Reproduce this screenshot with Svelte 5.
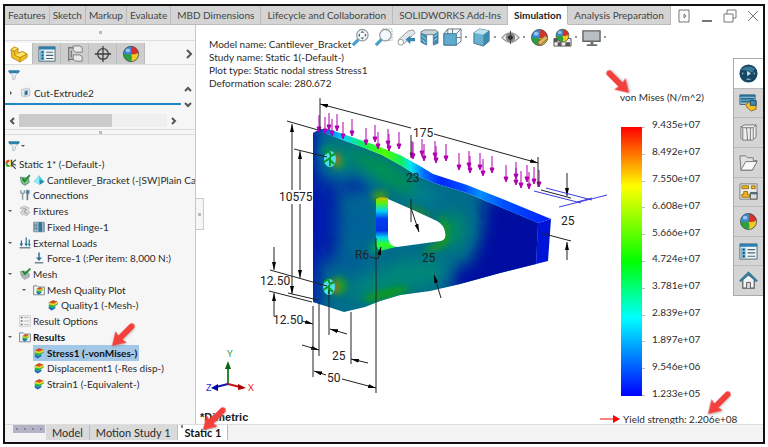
<script lang="ts">
  const ribbonTabs = [
    'Features',
    'Sketch',
    'Markup',
    'Evaluate',
    'MBD Dimensions',
    'Lifecycle and Collaboration',
    'SOLIDWORKS Add-Ins',
    'Simulation',
    'Analysis Preparation',
  ];
  let activeRibbon = $state('Simulation');

  const managerTabs = ['part', 'properties', 'config', 'target', 'appearance'];
  let activeManager = $state('part');

  type Row = { label: string; icons: string[]; level: number; open?: boolean; bold?: boolean };

  const rows: Row[] = [
    { label: 'Static 1* (-Default-)', icons: ['study'], level: 0 },
    { label: 'Cantilever_Bracket (-[SW]Plain Carl', icons: ['solid', 'body'], level: 1 },
    { label: 'Connections', icons: ['connections'], level: 1 },
    { label: 'Fixtures', icons: ['fixtures'], level: 1, open: true },
    { label: 'Fixed Hinge-1', icons: ['hinge'], level: 2 },
    { label: 'External Loads', icons: ['loads'], level: 1, open: true },
    { label: 'Force-1 (:Per item: 8,000 N:)', icons: ['force'], level: 2 },
    { label: 'Mesh', icons: ['mesh'], level: 1, open: true },
    { label: 'Mesh Quality Plot', icons: ['plotfolder'], level: 2, open: true },
    { label: 'Quality1 (-Mesh-)', icons: ['plot'], level: 3 },
    { label: 'Result Options', icons: ['options'], level: 1 },
    { label: 'Results', icons: ['plotfolder'], level: 1, open: true, bold: true },
    { label: 'Stress1 (-vonMises-)', icons: ['plot'], level: 2, bold: true },
    { label: 'Displacement1 (-Res disp-)', icons: ['plot'], level: 2 },
    { label: 'Strain1 (-Equivalent-)', icons: ['plot'], level: 2 },
  ];
  let selected = $state('Stress1 (-vonMises-)');

  const hudTools = [
    { name: 'zoomfit', menu: false },
    { name: 'zoomarea', menu: false },
    { name: 'previous', menu: false },
    { name: 'section', menu: false },
    { name: 'orientation', menu: true },
    { name: 'display', menu: true },
    { name: 'eye', menu: true },
    { name: 'editappearance', menu: false },
    { name: 'scene', menu: true },
    { name: 'monitor', menu: true },
  ];

  const taskTabs = ['compass', 'resources', 'library', 'folder', 'palette', 'appearance', 'properties', 'home'];

  const legend = [
    '9.435e+07', '8.492e+07', '7.550e+07', '6.608e+07', '5.666e+07', '4.724e+07',
    '3.781e+07', '2.839e+07', '1.897e+07', '9.546e+06', '1.233e+05',
  ];

  // tip of every force arrow along the top face
  const forces = [
    [319, 132], [325, 134], [329, 130], [332, 136], [337, 131], [343, 139], [352, 136],
    [366, 145], [375, 142], [378, 149], [388, 146], [389, 151], [399, 149], [412, 158],
    [413, 159], [422, 156], [424, 161], [435, 158], [436, 163], [446, 161], [459, 170],
    [469, 168], [470, 173], [480, 170], [483, 176], [492, 173], [506, 182], [516, 179],
    [516, 185], [521, 188], [527, 182], [529, 189], [534, 184], [539, 187],
  ];

  // dimension leaders: x1, y1, x2, y2, arrowhead at the second point
  const leaders = [
    [411, 128, 320, 104], [434, 134, 538, 163],
    [292, 190, 292, 124], [292, 204, 292, 294],
    [300, 190, 300, 151], [300, 204, 300, 278],
    [274, 247, 274, 270], [274, 316, 274, 293],
    [302, 321, 313, 324], [347, 334, 330, 329],
    [302, 345, 319, 350], [368, 363, 351, 359],
    [326, 375, 314, 371], [342, 379, 376, 388],
    [411, 208, 419, 232], [378, 259, 381, 247],
    [441, 298, 434, 275], [567, 173, 567, 196], [567, 260, 567, 242],
  ];

  const extensions = [
    [320, 98, 320, 131], [538, 157, 538, 187], [411, 135, 411, 158], [411, 199, 411, 222],
    [287, 121, 318, 130], [294, 149, 327, 157], [270, 270, 327, 286], [288, 293, 318, 300],
    [269, 291, 312, 302], [313, 306, 313, 377], [319, 303, 319, 356], [329, 290, 329, 335],
    [351, 312, 351, 364], [376, 238, 376, 393], [370, 257, 378, 259],
    [541, 190, 571, 198], [541, 233, 571, 241],
  ];

  const dims: [string, number, number][] = [
    ['175', 413, 137], ['105', 279, 201], ['75', 299, 201], ['23', 406, 182],
    ['25', 422, 262], ['R6', 355, 259], ['12.50', 260, 285], ['12.50', 273, 324],
    ['25', 332, 360], ['50', 327, 382], ['25', 561, 225],
  ];

  const callouts = [
    [112, 346, 45], [203, 430, 45], [708, 414, 45], [629, 93, -45],
  ];
</script>

{#snippet ball()}
  <circle cx="10" cy="10" r="8.5" fill="#2d9f3c" />
  <path d="M10 1.5A8.5 8.5 0 0 0 1.6 9.5Q6 11 9.500 10.500Q11 6 10 1.500Z" fill="#3b86dc" />
  <path d="M10 1.500Q12 5 10 10.500Q15 11 18.400 9A8.500 8.500 0 0 0 10 1.500Z" fill="#dc2f2b" />
  <path d="M10 10.500Q15 11 18.400 9A8.500 8.500 0 0 1 10 18.500Q12 14 10 10.500Z" fill="#f3c926" />
  <circle cx="10" cy="10" r="8.500" fill="none" stroke="#4a4a50" stroke-width=".8" />
  <ellipse cx="6.500" cy="6" rx="2.500" ry="2" fill="#fff" opacity=".5" />
{/snippet}

{#snippet heatcube()}
  <path d="M3 6L10 2L17 4L18 9L13 12L14 15L8 19L3 16Z" fill="#28b64a" />
  <path d="M3 6L10 2L17 4L11 8Z" fill="#e5432e" />
  <path d="M3 6L11 8L17 4L18 8L11 11L3 9Z" fill="#f2cf2b" />
  <path d="M3 13L9 15L14 13L14 15L8 19L3 16Z" fill="#2368d8" />
{/snippet}

{#snippet icon(name: string)}
  <svg viewBox="0 0 20 20" aria-hidden="true">
    {#if name === 'part'}
      <path d="M1 5L5 2L9 4L9 9L14 7L19 10L19 14L11 19L2 14Z" fill="#f2c022" stroke="#a87a10" stroke-width=".8" />
      <path d="M1 5L5 7L5 11L11 14L11 19M5 7L9 4M11 14L19 10" fill="none" stroke="#a87a10" stroke-width=".8" />
      <path d="M2 5L5 3L8 4L5 6ZM6 11L14 8L17 10L11 13Z" fill="#ffe56c" />
    {:else if name === 'properties'}
      <path d="M1 2H19V18H1Z" fill="#eef4f8" stroke="#4e6673" />
      <path d="M1 2H19V5H1Z" fill="#2c80b0" />
      <path d="M2 6H7V17H2Z" fill="#7db9d8" />
      <path d="M4 8h2M4 11.500h2M4 15h2" stroke="#17506f" stroke-width="2" />
      <path d="M9 8h8M9 11.500h8M9 15h8" stroke="#4e6673" stroke-width="1.200" />
    {:else if name === 'config'}
      <path d="M3 2V18M3 3H10M3 16H10M6 6V14" fill="none" stroke="#777" stroke-width="1.500" />
      <path d="M8 1H15L18 3V8H11L8 6ZM8 11H15L18 13V18H11L8 16Z" fill="#e9e9e9" stroke="#777" />
    {:else if name === 'target'}
      <circle cx="10" cy="10" r="6" fill="none" stroke="#3d3d3d" stroke-width="1.400" />
      <path d="M10 1V19M1 10H19" stroke="#3d3d3d" stroke-width="1.400" />
    {:else if name === 'appearance'}
      {@render ball()}
    {:else if name === 'filter'}
      <path d="M1 4L8 11V18L12 16V11L19 4Z" fill="#f4f4f4" stroke="#8b979e" />
      <path d="M1 2H19V5L17 7H3L1 5Z" fill="#2c81ad" />
    {:else if name === 'feature'}
      <path d="M3 5L12 2L18 4V15L9 18L3 16Z" fill="#e6eaec" stroke="#98a1a6" />
      <path d="M8 7L14 5V14L8 16Z" fill="#5c9dbd" />
      <path d="M10 9L13 8V13H10Z" fill="#174f72" />
    {:else if name === 'study'}
      <circle cx="7" cy="9" r="6" fill="#f2cc22" />
      <path d="M1 9A6 6 0 0 1 7 3V9Z" fill="#e04a35" />
      <path d="M1 9A6 6 0 0 0 7 15V9Z" fill="#39aa45" />
      <circle cx="7" cy="9" r="2.500" fill="#dff3ff" />
      <path d="M10 10L18 18M11 3V14M11 9L18 3M12 9L18 12" stroke="#3c4d55" stroke-width="2" />
    {:else if name === 'solid'}
      <path d="M2 5L16 7L17 14L10 19L4 15Z" fill="#7bbd8f" stroke="#45775a" />
      <path d="M6 7L9 12L18 2" fill="none" stroke="#168a25" stroke-width="3" />
    {:else if name === 'body'}
      <path d="M10 2L19 13L11 18L1 13Z" fill="#49c9df" />
      <path d="M10 2L11 18L1 13Z" fill="#91e9f4" />
      <path d="M11 9L19 13L11 18Z" fill="#238fae" />
    {:else if name === 'connections'}
      <path d="M3 2V6L6 8L9 6V2M6 8V18" fill="none" stroke="#909ba0" stroke-width="2.500" />
      <path d="M12 2H17V8H15V18H13V8H12Z" fill="#337eac" stroke="#7c8b92" />
    {:else if name === 'fixtures'}
      <path d="M2 5L9 2L17 5L14 8L18 12L13 18L8 15L6 17L2 12L7 10Z" fill="#ddd" stroke="#999" />
      <path d="M7 6L12 7L9 12L14 14" fill="none" stroke="#8b8b8b" stroke-width="1.500" />
    {:else if name === 'hinge'}
      <path d="M1 2H19V18H1Z" fill="#b5c4cd" stroke="#536f80" />
      <path d="M9 2H15V18H9Z" fill="#267aa7" />
      <path d="M3 4V16M6 4V16M17 4V16M2 7H8M2 12H8M10 7H14M10 12H14" stroke="#4e6878" />
    {:else if name === 'loads'}
      <path d="M4 6V14M12 1V13M17 4V14" stroke="#286f99" stroke-width="2" />
      <path d="M1 11H7L4 16ZM9 11H15L12 16ZM15 12H20L17 16Z" fill="#286f99" />
      <path d="M1 18H19" stroke="#536a77" stroke-width="2" />
    {:else if name === 'force'}
      <path d="M10 1V12" stroke="#286f99" stroke-width="2.500" />
      <path d="M5 9H15L10 15Z" fill="#286f99" />
      <path d="M3 18H17" stroke="#536a77" stroke-width="2" />
    {:else if name === 'mesh'}
      <path d="M2 6L12 5L17 9V15L9 19L4 14Z" fill="#b5bfc0" stroke="#7e8a8c" />
      <path d="M4 8L13 17M7 6L16 13M5 13L14 7" stroke="#7e8a8c" />
      <path d="M6 5L10 10L19 1" fill="none" stroke="#168a25" stroke-width="3" />
    {:else if name === 'plotfolder'}
      <path d="M1 3H7L9 5H19V18H1Z" fill="#f4f4f4" stroke="#737f86" stroke-width="1.500" />
      <g transform="translate(4 4) scale(.7)">{@render heatcube()}</g>
    {:else if name === 'plot'}
      {@render heatcube()}
    {:else if name === 'options'}
      <path d="M1 1H19V19H1Z" fill="#f3f3f3" stroke="#bbb" />
      <path d="M3 4h3M3 10h3M3 16h3" stroke="#60737e" stroke-width="2.500" />
      <path d="M8 4h9M8 10h9M8 16h9" stroke="#999" />
    {:else if name === 'zoomfit' || name === 'zoomarea'}
      <path d="M2 18L8 12" stroke="#4b9fc8" stroke-width="3.500" />
      <circle cx="12" cy="7.500" r="6" fill="#f4f9fb" stroke="#8d999f" stroke-width="1.200" />
      {#if name === 'zoomfit'}
        <path d="M12 3L14 5H10ZM12 12L14 10H10ZM7.500 7.500L9.500 5.500V9.500ZM16.500 7.500L14.500 5.500V9.500Z" fill="#586168" />
      {:else}
        <path d="M9 1H19V13H15" fill="none" stroke="#8d999f" stroke-dasharray="1.500 1.500" />
      {/if}
    {:else if name === 'previous'}
      <path d="M2 12L12 3L17 2L19 5L8 16L3 17Z" fill="#e3e6e7" stroke="#8d999f" />
      <circle cx="4" cy="15" r="3" fill="#fff" stroke="#8d999f" />
      <path d="M9 12L14 8V10.500H19V14H14V17Z" fill="#3485b1" />
    {:else if name === 'section'}
      <path d="M1 4L5 2H16L19 4V16L14 18V7H7V18L1 15Z" fill="#c9d2d6" stroke="#738189" />
      <path d="M1 5L7 7V18L1 15ZM14 7L19 4V16L14 18Z" fill="#3f8db5" />
      <path d="M2 8L6 12M2 12L6 16M15 9L18 7M15 13L18 11" stroke="#b7dceb" />
    {:else if name === 'orientation'}
      <path d="M5 1H19V14L14 18H1V6Z" fill="#f4f7f9" stroke="#69757b" />
      <path d="M1 6H14V18H1Z" fill="#60acd0" stroke="#3a7899" />
      <path d="M14 6L19 1M10 1V6M5 1V6M14 10H19" stroke="#69757b" />
    {:else if name === 'display'}
      <path d="M2 5L8 1L18 3V14L12 19L2 16Z" fill="#6ab0cf" stroke="#387590" />
      <path d="M2 5L8 1L18 3L12 7Z" fill="#bfe2ef" />
      <path d="M12 7L18 3V14L12 19Z" fill="#3e89ad" />
    {:else if name === 'eye'}
      <path d="M1 10Q10 0 19 10Q10 20 1 10Z" fill="#eee" stroke="#999" stroke-width="1.300" />
      <circle cx="10" cy="10" r="5" fill="#888" />
      <circle cx="10" cy="10" r="2.500" fill="#222" />
      <path d="M10 3V17" stroke="#444" />
    {:else if name === 'editappearance'}
      {@render ball()}
      <path d="M8 18L9 14L16 8L19 11L12 17Z" fill="#e5b35c" stroke="#785f3b" />
    {:else if name === 'scene'}
      <path d="M1 11H19V19H1Z" fill="#eee" stroke="#555" />
      <path d="M1 11h4v4H1zM9 11h4v4H9zM5 15h4v4H5zM13 15h5v4h-5z" fill="#555" />
      <g transform="translate(2 0) scale(.8)">{@render ball()}</g>
    {:else if name === 'monitor'}
      <path d="M1 3H19V14H1Z" fill="#b9bec0" stroke="#606668" stroke-width="1.500" />
      <path d="M9 14H12V17H16V19H5V17H9Z" fill="#696f72" />
    {:else if name === 'compass'}
      <circle cx="10" cy="10" r="9.500" fill="#164863" />
      <path d="M2 6Q9 0 17 5L14 9L9 7Z" fill="#3a789a" />
      <path d="M9 8L12 10L9 12ZM4 9V11M16 9V11M8 16H12" fill="#d8edf6" stroke="#bcd9e6" />
    {:else if name === 'resources'}
      <path d="M1 2H17V12H1Z" fill="#a6cadb" stroke="#385e72" />
      <path d="M1 3H17M2 6H16M2 9H16" stroke="#236f98" stroke-width="2" />
      <path d="M7 12L12 9H18V17L13 19L9 16Z" fill="#f1bd28" stroke="#987012" />
      <path d="M12 8H18V13H12Z" fill="#3d8cb4" stroke="#1c526e" />
    {:else if name === 'library'}
      <path d="M2 4L6 2L18 2V15L14 18H4L2 16Z" fill="#eee" stroke="#777" />
      <path d="M4 5V18M2 4L5 5H15L18 2M8 5L9 18M12 5V18M15 5V17" fill="none" stroke="#777" />
    {:else if name === 'folder'}
      <path d="M1 3H7L9 5H15V8H19L14 18H2Z" fill="#e2e2e2" stroke="#777" />
      <path d="M2 18L7 9H19L14 18Z" fill="#f8f8f8" stroke="#777" />
    {:else if name === 'palette'}
      <path d="M1 2H19V18H1Z" fill="#eee" stroke="#777" />
      <path d="M3 4H10V7H3ZM13 4H17V7H13ZM5 10H9V13H11V16H3V13H5Z" fill="#edb81f" stroke="#977318" />
      <path d="M12 11H19V18H12Z" fill="#ddd" stroke="#555" />
      <path d="M12 11H19V13H12Z" fill="#566e7c" />
    {:else if name === 'home'}
      <path d="M4 9V18H16V9L10 4Z" fill="#f4f4f4" stroke="#555" stroke-width="1.200" />
      <path d="M1 11L10 2L19 11" fill="none" stroke="#34809f" stroke-width="2.500" />
      <path d="M8 18V12H12V18" fill="#ddd" stroke="#555" />
    {/if}
  </svg>
{/snippet}

<div class="window">
  <header class="ribbon">
    <nav class="ribbon-tabs">
      {#each ribbonTabs as tab}
        <button class:active={tab === activeRibbon} onclick={() => (activeRibbon = tab)}>{tab}</button>
      {/each}
    </nav>
    <div class="window-buttons">
      <button aria-label="Expand pane">
        <svg viewBox="0 0 14 14"><path d="M2 1H12V13H2ZM7 5L9 7L7 9Z" /></svg>
      </button>
      <button aria-label="Minimize">
        <svg viewBox="0 0 14 14"><path d="M2 12H12" stroke-width="2" /></svg>
      </button>
      <button aria-label="Restore">
        <svg viewBox="0 0 14 14"><path d="M4 5V1H13V9H10M1 5H10V13H1Z" /></svg>
      </button>
      <button aria-label="Close">
        <svg viewBox="0 0 14 14"><path d="M2 2L12 12M12 2L2 12" /></svg>
      </button>
    </div>
  </header>

  <main class="workspace">
    <aside class="manager">
      <div class="grip"><i></i></div>
      <div class="manager-tabs">
        {#each managerTabs as tab}
          <button class:active={tab === activeManager} aria-label={tab} onclick={() => (activeManager = tab)}>
            {@render icon(tab)}
          </button>
        {/each}
        <button class="more" aria-label="More tabs">
          <svg viewBox="0 0 10 10"><path d="M3 1L7 5L3 9" /></svg>
        </button>
      </div>
      <div class="features">
        <button class="filter" aria-label="Filter features">{@render icon('filter')}</button>
        <div class="feature-body">
          <button class="feature"><b></b>{@render icon('feature')}<span>Cut-Extrude2</span></button>
          <div class="v-scroll">
            <button aria-label="Scroll up"><svg viewBox="0 0 10 10"><path d="M2 7L5 4L8 7" /></svg></button>
            <button aria-label="Scroll down"><svg viewBox="0 0 10 10"><path d="M2 4L5 7L8 4" /></svg></button>
          </div>
        </div>
        <div class="h-scroll">
          <button aria-label="Scroll left"><svg viewBox="0 0 10 10"><path d="M7 2L4 5L7 8" /></svg></button>
          <div class="track"><div class="thumb"></div></div>
          <button aria-label="Scroll right"><svg viewBox="0 0 10 10"><path d="M3 2L6 5L3 8" /></svg></button>
        </div>
      </div>
      <div class="grip small"><i></i></div>
      <div class="tree-filter">
        <button class="filter" aria-label="Filter tree">{@render icon('filter')}</button>
        <b></b>
      </div>
      <ul class="tree">
        {#each rows as row}
          <li class="level-{row.level}">
            {#if row.level > 0}
              <span class="expander">
                {#if row.open}<b></b>{/if}
              </span>
            {/if}
            <button
              class:bold={row.bold}
              class:selected={row.label === selected}
              onclick={() => (selected = row.label)}
            >
              {#each row.icons as name}{@render icon(name)}{/each}
              <span>{row.label}</span>
            </button>
          </li>
        {/each}
      </ul>
    </aside>

    <section class="viewport">
      <svg class="model" viewBox="196 25 567 399" role="img" aria-label="von Mises stress plot of the bracket">
        <defs>
          <clipPath id="front">
            <path d="M313 133L320 131L340 139L362 147L382 155L400 165L418 176L434 183L467 193L500 207L538 223L536 264L500 273L460 284L430 291L400 295L380 301L365 307L344 312L313 302Z" />
          </clipPath>
          <linearGradient id="top" gradientUnits="userSpaceOnUse" x1="313" y1="0" x2="551" y2="0">
            <stop offset="0" stop-color="#0010c0" />
            <stop offset=".05" stop-color="#0060f0" />
            <stop offset=".13" stop-color="#00d8f8" />
            <stop offset=".21" stop-color="#10f060" />
            <stop offset=".3" stop-color="#50ff00" />
            <stop offset=".37" stop-color="#10f060" />
            <stop offset=".41" stop-color="#00e8f0" />
            <stop offset=".47" stop-color="#0068ff" />
            <stop offset=".54" stop-color="#0028ff" />
            <stop offset=".64" stop-color="#0050ff" />
            <stop offset=".7" stop-color="#0090ff" />
            <stop offset=".8" stop-color="#0050ff" />
            <stop offset="1" stop-color="#0020ff" />
          </linearGradient>
          <linearGradient id="slot" x1="0" y1="0" x2="0" y2="1">
            <stop offset="0" stop-color="#e0b000" />
            <stop offset=".1" stop-color="#60f000" />
            <stop offset=".25" stop-color="#00d8f0" />
            <stop offset=".4" stop-color="#0040f0" />
            <stop offset=".62" stop-color="#0030e8" />
            <stop offset=".75" stop-color="#00d8f0" />
            <stop offset=".88" stop-color="#30ff20" />
            <stop offset="1" stop-color="#20e060" />
          </linearGradient>
          <filter id="soft" x="-50%" y="-50%" width="200%" height="200%"><feGaussianBlur stdDeviation="8" /></filter>
          <filter id="softer" x="-50%" y="-50%" width="200%" height="200%"><feGaussianBlur stdDeviation="3" /></filter>
          <marker id="head" viewBox="0 0 8 4" refX="8" refY="2" markerWidth="8" markerHeight="4" orient="auto" markerUnits="userSpaceOnUse">
            <path d="M0 0L8 2L0 4Z" />
          </marker>
        </defs>

        <g clip-path="url(#front)">
          <path d="M310 125H560V320H310Z" fill="#006c8c" />
          <g filter="url(#soft)">
            <path d="M300 120H318V310H300Z" fill="#0008b4" />
            <ellipse cx="329" cy="220" rx="12" ry="48" fill="#0020a8" />
            <ellipse cx="356" cy="185" rx="14" ry="9" fill="#0020a8" />
            <path d="M485 192L560 215V280L460 300L470 265L482 232Z" fill="#0008a0" />
            <path d="M456 268L500 250V290H440Z" fill="#0010a0" />
            <path d="M345 146L385 158L420 186L435 208L400 192L362 172Z" fill="#009450" />
            <path d="M330 140L348 148L350 170L330 170Z" fill="#008870" />
            <ellipse cx="425" cy="196" rx="14" ry="9" fill="#008090" />
            <ellipse cx="452" cy="230" rx="12" ry="18" fill="#009060" />
            <ellipse cx="360" cy="222" rx="12" ry="24" fill="#00609a" />
            <path d="M400 262L440 258L446 280L385 296L350 300L352 284Z" fill="#008878" />
            <ellipse cx="353" cy="262" rx="14" ry="10" fill="#005c98" />
          </g>
          <g filter="url(#softer)">
            <path d="M438 212L448 224L449 242L438 250L420 252L442 240L443 228Z" fill="#1c9c18" />
            <ellipse cx="419" cy="211" rx="14" ry="2" fill="#309010" transform="rotate(24 419 211)" />
            <ellipse cx="386" cy="294" rx="24" ry="5" fill="#109820" transform="rotate(-14 386 294)" />
            <ellipse cx="339" cy="286" rx="8" ry="9" fill="#209a28" />
            <ellipse cx="338" cy="162" rx="6" ry="7" fill="#289838" />
            <ellipse cx="380" cy="196" rx="8" ry="5" fill="#409818" />
            <ellipse cx="375" cy="248" rx="5" ry="6" fill="#009860" />
            <ellipse cx="327" cy="150" rx="7" ry="3" fill="#009850" />
          </g>
        </g>
        <path d="M313 133L320 129L328 129L340 133L375 145L400 155L420 166L433 174L467 185L500 198L551 219L538 223L500 207L467 193L434 183L418 176L400 165L382 155L362 147L340 139L322 132Z" fill="url(#top)" />
        <path d="M538 223L551 219L548 261L536 264Z" fill="#0014d8" />
        <path d="M376 199Q379 196 388 198V238L396 247L380 251Q376 248 376 242Z" fill="url(#slot)" />
        <path d="M388 199L411 209L437 221Q444 225 445 232Q447 239 441 241L397 247Q388 246 388 236Z" fill="#fff" />

        {#each [[330, 159], [329, 287]] as [x, y]}
          <ellipse cx={x + 5} cy={y} rx="4" ry="6" fill="#d06020" opacity=".8" filter="url(#softer)" />
          <ellipse cx={x} cy={y} rx="6" ry="8" fill="#4ce0e8" />
          <path d="M{x - 5} {y - 5}l4 -3 2 5 4 -2M{x - 6} {y + 3}l5 -3 5 5M{x} {y - 2}v9" fill="none" stroke="#089828" stroke-width="2" />
        {/each}

        <g class="forces">
          {#each forces as [x, y]}
            <path d="M{x} {y - 17}V{y - 4}" />
            <path d="M{x - 2} {y - 5}h4l-2 5z" />
          {/each}
        </g>

        <g class="dims">
          {#each leaders as [x1, y1, x2, y2]}
            <line {x1} {y1} {x2} {y2} marker-end="url(#head)" />
          {/each}
          {#each extensions as [x1, y1, x2, y2]}
            <line {x1} {y1} {x2} {y2} />
          {/each}
          {#each dims as [label, x, y]}
            <text {x} {y}>{label}</text>
          {/each}
        </g>
        <path d="M546 188L592 200M534 191L581 203M559 207L607 195M577 202L592 198" fill="none" stroke="#3a3ae0" />

        <path d="M228 384V368" stroke="#2a8a2a" stroke-width="2" />
        <path d="M225 369L228 361L231 369Z" fill="#0b640b" />
        <path d="M228 384L240 387" stroke="#c01818" stroke-width="2" />
        <path d="M238 384L246 388L238 390Z" fill="#b00000" />
        <path d="M228 384L216 387" stroke="#1515b0" stroke-width="2" />
        <path d="M218 384L211 388L218 391Z" fill="#0000a8" />
        <text class="axis y" x="227" y="357">Y</text>
        <text class="axis x" x="248" y="391">X</text>
        <text class="axis z" x="206" y="391">Z</text>
        <text class="view-name" x="200" y="421">*Dimetric</text>
      </svg>

      <div class="study-info">
        <p>Model name: Cantilever_Bracket</p>
        <p>Study name: Static 1(-Default-)</p>
        <p>Plot type: Static nodal stress Stress1</p>
        <p>Deformation scale: 280.672</p>
      </div>

      <div class="hud">
        {#each hudTools as tool}
          <button class:menu={tool.menu} aria-label={tool.name}>{@render icon(tool.name)}</button>
        {/each}
      </div>

      <button class="splitter" aria-label="Collapse panel"><i></i></button>

      <div class="legend">
        <h2>von Mises (N/m^2)</h2>
        <div class="scale">
          <div class="bar"></div>
          <div class="ticks">
            {#each legend as value}<i></i>{/each}
          </div>
          <ol>
            {#each legend as value}<li>{value}</li>{/each}
          </ol>
        </div>
        <p class="yield">
          <svg viewBox="0 0 20 8"><path d="M0 4H14" stroke="#f00" /><path d="M13 0L20 4L13 8Z" fill="#f00" /></svg>
          Yield strength: 2.206e+08
        </p>
      </div>

      <div class="task-pane">
        {#each taskTabs as tab, i}
          <button class:active={i === 0} aria-label={tab}>{@render icon(tab)}</button>
        {/each}
      </div>
    </section>
  </main>

  <footer class="study-tabs">
    <div class="tab-nav"><i></i><i></i><i></i><i></i></div>
    <button>Model</button>
    <button>Motion Study 1</button>
    <button class="active">Static 1</button>
  </footer>

  <svg class="callouts" viewBox="5 6 758 436" aria-hidden="true">
    {#each callouts as [x, y, angle]}
      <path d="M0 0L-8 -13L-3 -12L-3 -29Q0 -33 3 -29L3 -12L8 -13Z" transform="translate({x} {y}) rotate({angle})" />
    {/each}
  </svg>
</div>

<style>
  :global(body) {
    background: #fff;
    font-family: Lato, 'Open Sans', sans-serif;
    font-size: 10px;
    color: #2b2b2b;
  }

  button {
    display: flex;
    align-items: center;
    justify-content: center;
    padding: 0;
    border: 0;
    background: none;
    color: inherit;
    font: inherit;
    white-space: nowrap;
  }

  svg {
    display: block;
    flex: none;
  }

  p,
  h2,
  ul,
  ol {
    margin: 0;
    padding: 0;
    list-style: none;
    font-size: 10px;
    font-weight: 400;
  }

  .window {
    position: relative;
    display: flex;
    flex-direction: column;
    box-sizing: border-box;
    min-height: calc(100vh - 7px);
    margin: 4px 3px 3px;
    border: 2px solid #111;
    background: #f5f5f5;
  }

  .ribbon {
    display: flex;
    justify-content: space-between;
    height: 19px;
    background: #fff;
  }

  .ribbon-tabs {
    display: flex;
    background: #d4d4d4;
  }

  .ribbon-tabs button {
    padding: 0 3px;
    border-right: 1px solid #bbb;
    border-bottom: 1px solid #bbb;
    color: #444;
  }

  .ribbon-tabs button:nth-child(n + 5) {
    padding: 0 6px;
  }

  .ribbon-tabs button.active {
    border-bottom-color: #fff;
    background: #fff;
    color: #222;
    font-weight: 700;
  }

  .window-buttons {
    display: flex;
    align-items: center;
    gap: 9px;
    padding-right: 3px;
  }

  .window-buttons svg {
    width: 14px;
    height: 14px;
    fill: none;
    stroke: #777;
  }

  .workspace {
    display: flex;
    flex: 1;
  }

  .manager {
    display: flex;
    flex-direction: column;
    flex: none;
    width: 190px;
    overflow: hidden;
    border-right: 1px solid #c8c8c8;
    background: #f6f6f6;
  }

  .grip {
    display: flex;
    align-items: center;
    justify-content: center;
    height: 15px;
    border-bottom: 1px solid #ddd;
  }

  .grip.small {
    height: 4px;
    border-top: 1px solid #ddd;
  }

  .grip i,
  .splitter i {
    width: 3px;
    height: 3px;
    background: #bbb;
  }

  .manager-tabs {
    display: flex;
    height: 24px;
    padding-top: 2px;
    box-sizing: border-box;
    border-bottom: 1px solid #ddd;
  }

  .manager-tabs button {
    width: 28px;
    box-sizing: border-box;
    border-right: 1px solid #bbb;
    background: #cdcdcd;
  }

  .manager-tabs button.active {
    background: #fff;
  }

  .manager-tabs svg {
    width: 18px;
    height: 18px;
  }

  .manager-tabs .more {
    width: 12px;
    margin-left: auto;
    border: 0;
    background: none;
  }

  .manager-tabs .more svg,
  .v-scroll svg,
  .h-scroll svg {
    width: 10px;
    height: 10px;
    fill: none;
    stroke: #555;
    stroke-width: 2;
  }

  .filter {
    width: 12px;
    height: 12px;
  }

  .filter svg {
    width: 12px;
    height: 12px;
  }

  .features {
    padding-top: 4px;
  }

  .features .filter {
    margin-left: 3px;
  }

  .feature-body {
    display: flex;
    justify-content: space-between;
    height: 30px;
  }

  .feature {
    flex: 1;
    justify-content: flex-start;
    gap: 3px;
    height: 23px;
    margin-top: 1px;
    padding-left: 5px;
    border-bottom: 2px solid #2088c4;
  }

  .feature b {
    width: 0;
    margin-right: 3px;
    border: 2px solid transparent;
    border-left-color: #555;
  }

  .feature svg {
    width: 11px;
    height: 11px;
  }

  .v-scroll {
    display: flex;
    flex-direction: column;
    justify-content: space-around;
    width: 14px;
  }

  .v-scroll svg {
    margin: 0 auto;
  }

  .h-scroll {
    display: flex;
    height: 13px;
    margin: 3px 14px 2px 0;
  }

  .h-scroll button {
    width: 14px;
  }

  .track {
    flex: 1;
    background: #efefef;
  }

  .thumb {
    width: 63%;
    height: 100%;
    background: #cbcbcb;
  }

  .tree-filter {
    display: flex;
    align-items: center;
    gap: 1px;
    height: 21px;
    padding-left: 3px;
  }

  .tree-filter b,
  .expander b {
    width: 0;
    height: 0;
    border: 2px solid transparent;
    border-top-color: #555;
    border-bottom: 0;
  }

  .tree {
    display: grid;
    grid-auto-rows: 1fr;
    height: 236px;
  }

  .tree li {
    display: flex;
    min-height: 0;
  }

  .level-2 {
    padding-left: 14px;
  }

  .level-3 {
    padding-left: 28px;
  }

  .expander {
    display: flex;
    align-items: center;
    flex: none;
    width: 14px;
  }

  .expander b {
    margin-left: 3px;
  }

  .tree button {
    gap: 2px;
    padding-right: 2px;
  }

  .tree button.bold {
    color: #111;
    font-weight: 700;
  }

  .tree button.selected {
    background: #a3c7e6;
  }

  .tree svg {
    width: 12px;
    height: 12px;
  }

  .viewport {
    position: relative;
    display: flex;
    flex: 1;
    min-width: 0;
    background: #fff;
  }

  .model {
    position: absolute;
    inset: 0;
    width: 100%;
    height: 100%;
  }

  .forces path {
    fill: #b000b0;
    stroke: #b000b0;
    stroke-width: 1;
  }

  .dims line {
    stroke: #222;
    stroke-width: 1;
  }

  .dims text {
    fill: #222;
    font-family: Roboto, 'Liberation Sans', sans-serif;
    font-size: 12px;
  }

  .axis {
    font-size: 9px;
  }

  .axis.y {
    fill: #2a9a2a;
  }

  .axis.x {
    fill: #e02020;
  }

  .axis.z {
    fill: #3030d0;
  }

  .view-name {
    fill: #222;
    font-family: 'Liberation Sans', sans-serif;
    font-size: 11px;
    font-weight: 700;
  }

  .study-info {
    position: relative;
    padding: 13px 0 0 13px;
    line-height: 13px;
  }

  .hud {
    position: absolute;
    top: 2px;
    left: 155px;
    display: flex;
    gap: 3px;
  }

  .hud button {
    justify-content: flex-start;
    width: 20px;
    height: 20px;
  }

  .hud button.menu {
    width: 26px;
  }

  .hud button.menu::after {
    width: 2px;
    height: 2px;
    margin-left: 3px;
    background: #999;
    content: '';
  }

  .hud svg {
    width: 19px;
    height: 19px;
  }

  .splitter {
    position: absolute;
    top: 173px;
    left: 0;
    width: 8px;
    height: 32px;
    border: 1px solid #ccc;
    border-left: 0;
    background: #f6f6f6;
  }

  .legend {
    position: relative;
    display: flex;
    flex-direction: column;
    width: 133px;
    margin-left: auto;
    padding-top: 65px;
  }

  .legend h2 {
    padding-left: 20px;
    line-height: 14px;
  }

  .scale {
    display: flex;
    margin: 13px 0 0 21px;
  }

  .bar {
    width: 21px;
    height: 269px;
    margin-top: 10px;
    background: linear-gradient(#f00, #ff0 22%, #0f0 50%, #0ff 71%, #00f);
  }

  .ticks {
    display: flex;
    flex-direction: column;
    justify-content: space-between;
    width: 3px;
    height: 269px;
    margin-top: 10px;
  }

  .ticks i {
    height: 1px;
    background: #bbb;
  }

  .scale ol {
    display: flex;
    flex-direction: column;
    justify-content: space-between;
    height: 283px;
    padding-left: 7px;
    line-height: 14px;
  }

  .yield {
    display: flex;
    align-items: center;
    gap: 3px;
    height: 10px;
    margin-top: 14px;
    line-height: 14px;
    white-space: nowrap;
  }

  .yield svg {
    width: 20px;
    height: 8px;
  }

  .task-pane {
    position: relative;
    display: flex;
    flex-direction: column;
    align-self: flex-start;
    width: 29px;
    height: 236px;
    margin-top: 33px;
    border: 1px solid #aaa;
    border-right: 0;
    background: #d5d5d5;
  }

  .task-pane button {
    flex: 1;
    border-bottom: 1px solid #bbb;
  }

  .task-pane button:last-child {
    border-bottom: 0;
  }

  .task-pane button.active {
    background: #fff;
  }

  .task-pane svg {
    width: 19px;
    height: 19px;
  }

  .study-tabs {
    position: relative;
    display: flex;
    height: 15px;
    padding-bottom: 2px;
    border-top: 1px solid #ddd;
    background: #f3f3f3;
    font-size: 11px;
  }

  .study-tabs button {
    padding: 0 6px;
    border-right: 1px solid #bbb;
    background: #dadada;
  }

  .study-tabs button.active {
    padding: 0 6px 0 3px;
    background: #fff;
    color: #111;
    font-weight: 700;
  }

  .study-tabs button.active::before {
    align-self: flex-start;
    width: 2px;
    height: 3px;
    margin-right: 2px;
    background: #888;
    content: '';
  }

  .tab-nav {
    display: flex;
    align-items: center;
    justify-content: space-around;
    width: 32px;
    height: 8px;
    margin: 0 1px 0 8px;
    background: #b3b4c6;
  }

  .tab-nav i {
    width: 2px;
    height: 2px;
    background: #8788a2;
  }

  .callouts {
    position: absolute;
    inset: 0;
    width: 100%;
    height: 100%;
    pointer-events: none;
  }

  .callouts path {
    fill: #f4403c;
    filter: drop-shadow(1px 1px 1px #8888);
  }
</style>
